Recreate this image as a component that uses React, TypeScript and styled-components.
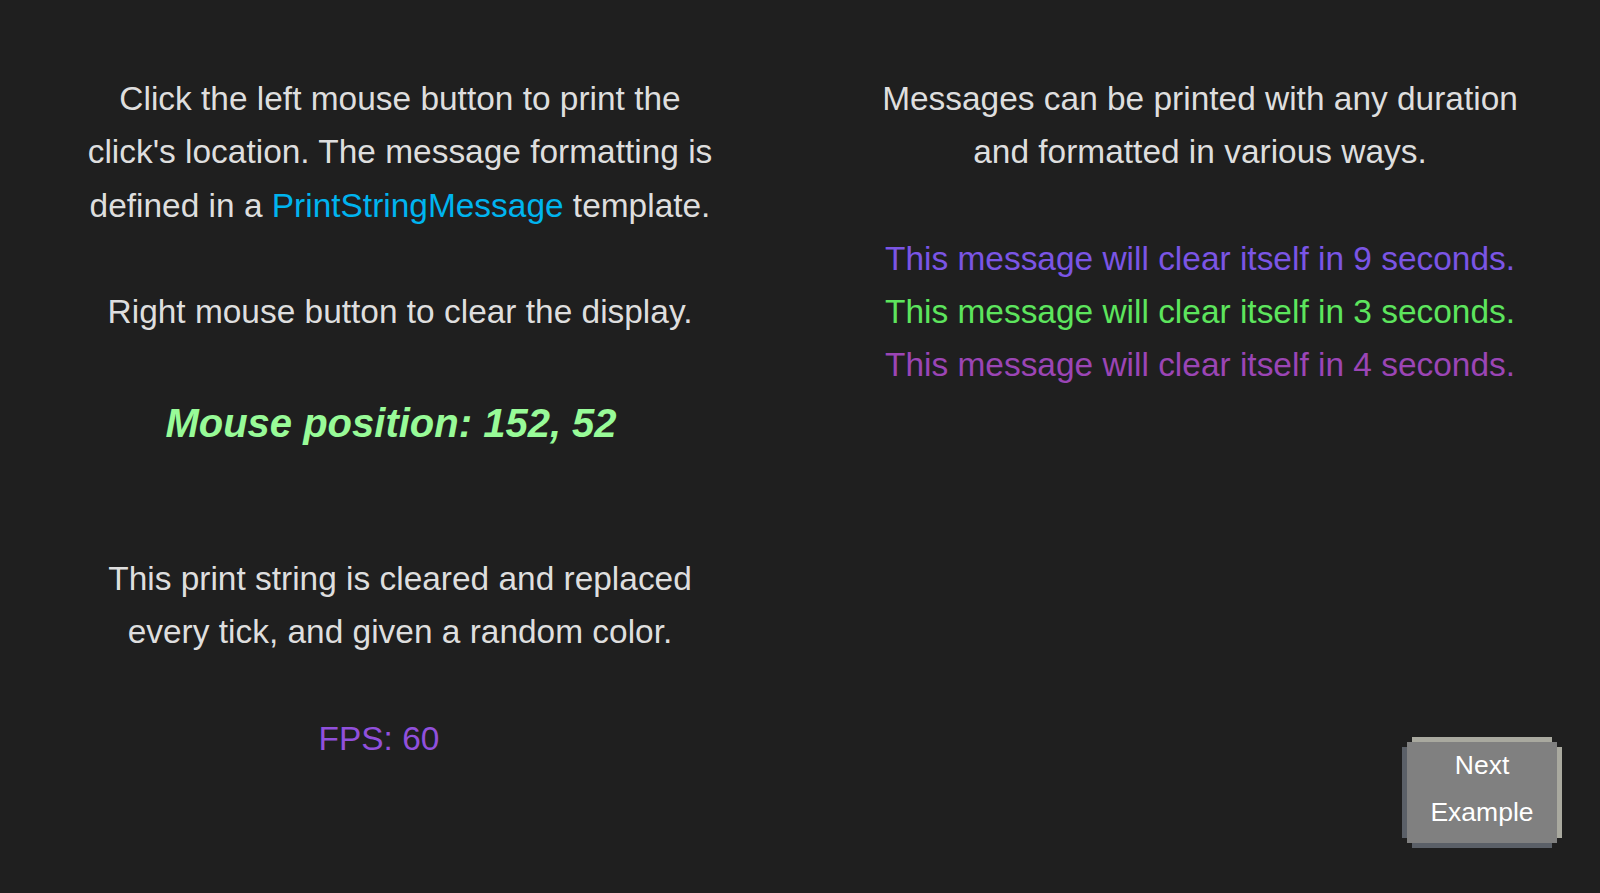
import React from "react";
import styled, { createGlobalStyle } from "styled-components";

const LINE = 53.3;

const Global = createGlobalStyle`
  html, body {
    margin: 0;
    padding: 0;
    background: #1f1f1f;
  }
  body {
    font-family: "Liberation Sans", Arial, sans-serif;
  }
`;

const Page = styled.main`
  display: grid;
  grid-template-columns: 800px 800px;
  height: 893px;
  box-sizing: border-box;
  padding: 72px 0 50px 0;
  overflow: hidden;
`;

const Column = styled.section`
  display: flex;
  flex-direction: column;
  align-items: center;
  min-height: 0;
`;

const Text = styled.p<{ $gap?: number; $color?: string; $shift?: number }>`
  margin: ${(p) => (p.$gap ?? 0) * LINE}px 0 0 0;
  padding-right: ${(p) => p.$shift ?? 0}px;
  font-size: 33.45px;
  line-height: ${LINE}px;
  color: ${(p) => p.$color ?? "#dedede"};
  text-align: center;
  white-space: nowrap;
`;

const Link = styled.span`
  color: #00b4ef;
`;

const MousePos = styled.p<{ $gap?: number }>`
  margin: ${(p) => (p.$gap ?? 0) * LINE + 5}px 0 -5px 0;
  padding-right: 18px;
  font-size: 40px;
  font-weight: bold;
  font-style: italic;
  line-height: ${LINE}px;
  color: #98fb98;
  white-space: nowrap;
`;

const NextButton = styled.button`
  margin-top: auto;
  align-self: flex-end;
  margin-right: 43px;
  width: 150px;
  height: 101px;
  padding: 0 0 8px 0;
  border: none;
  background: #808080;
  display: flex;
  flex-direction: column;
  align-items: center;
  justify-content: center;
  font-family: "Liberation Sans", Arial, sans-serif;
  font-size: 26.5px;
  line-height: 47px;
  color: #ffffff;
  cursor: pointer;
  box-shadow:
    0 -10px 0 -5px #a9a99f,
    10px 0 0 -5px #a9a99f,
    0 10px 0 -5px #5b6068,
    -10px 0 0 -5px #5b6068;
`;

export default function App() {
  return (
    <>
      <Global />
      <Page>
        <Column>
          <Text>
            Click the left mouse button to print the
            <br />
            click's location. The message formatting is
            <br />
            defined in a <Link>PrintStringMessage</Link> template.
          </Text>
          <Text $gap={1}>Right mouse button to clear the display.</Text>
          <MousePos $gap={1}>Mouse position: 152, 52</MousePos>
          <Text $gap={2}>
            This print string is cleared and replaced
            <br />
            every tick, and given a random color.
          </Text>
          <Text $gap={1} $color="#9150dc" $shift={42}>
            FPS: 60
          </Text>
        </Column>
        <Column>
          <Text>
            Messages can be printed with any duration
            <br />
            and formatted in various ways.
          </Text>
          <Text $gap={1} $color="#7b55e5">
            This message will clear itself in 9 seconds.
          </Text>
          <Text $color="#5de55d">This message will clear itself in 3 seconds.</Text>
          <Text $color="#9b45b5">This message will clear itself in 4 seconds.</Text>
          <NextButton>
            <span>Next</span>
            <span>Example</span>
          </NextButton>
        </Column>
      </Page>
    </>
  );
}
